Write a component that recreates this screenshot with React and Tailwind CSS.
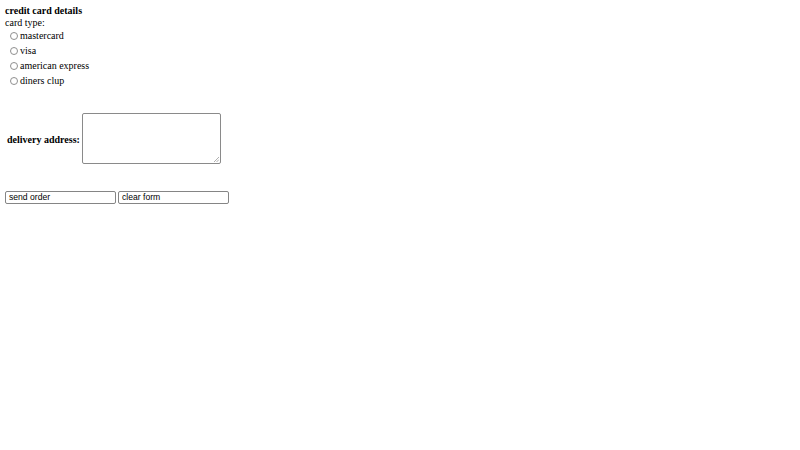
import React from "react";

const cards = ["mastercard", "visa", "american express", "diners clup"];

function Radio({ label }) {
  return (
    <div className="flex h-[15px] items-center">
      <span className="ml-[5px] mr-[2px] h-[8px] w-[8px] rounded-full border border-[#8f8f8f] bg-white" />
      <span className="mt-[1px]">{label}</span>
    </div>
  );
}

function FakeInput({ value }) {
  return (
    <div className="flex h-[13px] w-[111px] items-center rounded-[2px] border border-[#858585] bg-white px-[3px] font-['Liberation_Sans',sans-serif] text-[8.6px] leading-none text-black">
      {value}
    </div>
  );
}

export default function App() {
  return (
    <div className="min-h-[450px] w-[800px] bg-white px-[5px] pt-[5px] font-['Liberation_Serif',serif] text-[10px] leading-[11.5px] text-black">
      {/* Card type */}
      <div className="font-bold">credit card details</div>
      <div>card type:</div>
      <div>
        {cards.map((c) => (
          <Radio key={c} label={c} />
        ))}
      </div>

      {/* Delivery address */}
      <div className="mt-[25px] flex items-center gap-[2px] pl-[2px]">
        <span className="mt-[2px] font-bold">delivery address:</span>
        <div className="relative h-[51px] w-[139px] rounded-[2px] border border-[#8a8a8a] bg-white">
          <svg className="absolute bottom-[1px] right-[1px]" width="6" height="6" viewBox="0 0 6 6">
            <line x1="1" y1="6" x2="6" y2="1" stroke="#9a9a9a" strokeWidth="0.8" />
            <line x1="3.5" y1="6" x2="6" y2="3.5" stroke="#9a9a9a" strokeWidth="0.8" />
          </svg>
        </div>
      </div>

      {/* Actions */}
      <div className="mt-[27px] flex gap-[2px]">
        <FakeInput value="send order" />
        <FakeInput value="clear form" />
      </div>
    </div>
  );
}
